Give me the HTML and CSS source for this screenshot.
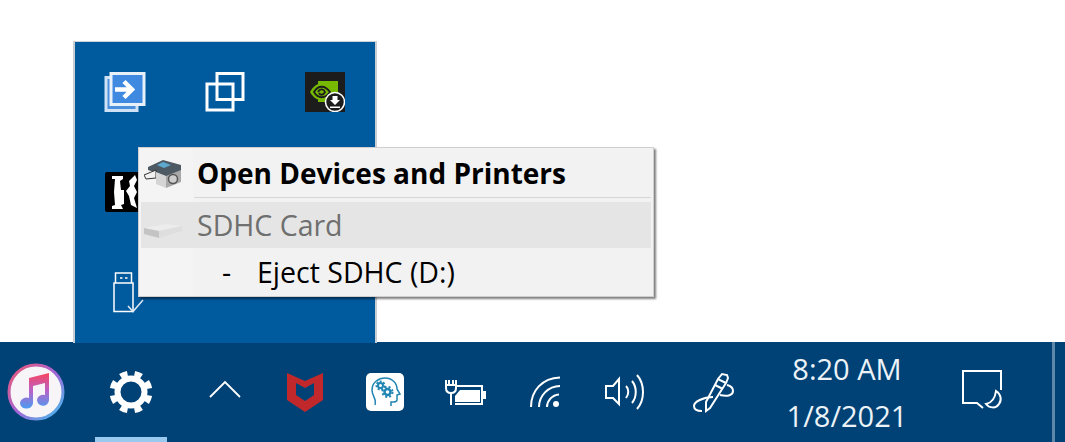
FILE: index.html
```html
<!DOCTYPE html>
<html lang="en">
<head>
    <meta charset="UTF-8" />
    <title>Tray</title>
    <link rel="stylesheet" href="styles.css">
</head>
<body>
    <div class="desktop">

        <!-- tray overflow window -->
        <div class="flyout">
            <div class="cell">
                <svg width="42" height="42" viewBox="0 0 42 42">
                    <rect x="2" y="6.500" width="31" height="33" fill="#4a90dc" stroke="#cfe2f5" stroke-width="3"/>
                    <rect x="7" y="2.500" width="33" height="31" fill="#3f8ae0" stroke="#e8f1fa" stroke-width="3"/>
                    <path d="M11 18.500H28M20 10.500L28 18.500L20 26.500" fill="none" stroke="#ffffff" stroke-width="4.500"/>
                </svg>
            </div>
            <div class="cell">
                <svg width="40" height="40" viewBox="0 0 40 40">
                    <rect x="12" y="1.500" width="26" height="26" fill="none" stroke="#ffffff" stroke-width="3"/>
                    <rect x="2" y="12" width="26" height="26" fill="none" stroke="#ffffff" stroke-width="3"/>
                </svg>
            </div>
            <div class="cell">
                <svg width="40" height="40" viewBox="0 0 40 40">
                    <rect width="40" height="40" fill="#1c1c1c"/>
                    <path d="M13 9H33V30H13Z" fill="#76b900"/>
                    <path d="M5 20C11 9 22 8 30 20C22 31 11 31 5 20Z" fill="#76b900"/>
                    <path d="M9 20C13 13 20 13 25 20C20 27 13 27 9 20Z" fill="none" stroke="#1c1c1c" stroke-width="1.800"/>
                    <path d="M13 20C15 16 19 17 20 20C18 24 15 23 14 21" fill="none" stroke="#1c1c1c" stroke-width="1.800"/>
                    <circle cx="30" cy="30" r="9.500" fill="#1c1c1c" stroke="#ffffff" stroke-width="1.500"/>
                    <path d="M27.500 24H32.500V28H35L30 33L25 28H27.500ZM25 34.500H35V36H25Z" fill="#ffffff"/>
                </svg>
            </div>
            <div class="cell">
                <svg width="40" height="40" viewBox="0 0 40 40">
                    <rect width="40" height="40" rx="2" fill="#000000"/>
                    <path d="M7 4H18V7L15 9L16 18L19 18V32L16 33L18 37H7V34L10 33L9 20L10 7L7 7Z" fill="#ffffff"/>
                    <path d="M21 19L25 14L24 9L30 3L32 8L29 14L32 20L29 26L32 36L26 33L24 24Z" fill="#ffffff"/>
                </svg>
            </div>
            <div class="cell"></div>
            <div class="cell"></div>
            <div class="cell usb">
                <svg width="31" height="41" viewBox="0 0 31 41">
                    <path d="M2.500 11V1H18.500V11M1 11H20V39.500H1Z" fill="none" stroke="#ffffff" stroke-width="1.500"/>
                    <path d="M7 6H9.500M12 6H14.500" stroke="#ffffff" stroke-width="1.500"/>
                    <path d="M15 34L20 39.500L30 28" fill="none" stroke="#dfeaf3" stroke-width="1.500"/>
                </svg>
            </div>
        </div>

        <!-- eject menu -->
        <div class="menu">
            <div class="menu-row top">
                <span class="menu-icon">
                    <svg width="38" height="28" viewBox="0 0 38 28">
                        <path d="M4 7L19 0L37 5V13L27 18L4 10Z" fill="#4d5a63"/>
                        <path d="M13 5L19 2L27 5L20 8Z" fill="#5ea9cf"/>
                        <path d="M0 15L12 10V18L2 19Z" fill="#f1f1f1" stroke="#333333"/>
                        <path d="M12 12L22 16V28L12 24Z" fill="#d5d5d5"/>
                        <path d="M22 16L37 10V22L22 28Z" fill="#a8a8a8"/>
                        <circle cx="29" cy="19" r="4.500" fill="#cccccc" stroke="#555555" stroke-width="1.500"/>
                    </svg>
                </span>
                <span class="menu-title">Open Devices and Printers</span>
            </div>
            <div class="menu-row device">
                <span class="menu-icon">
                    <svg width="38" height="15" viewBox="0 0 38 15">
                        <path d="M0 4L22 0L38 2L15 7Z" fill="#ececec"/>
                        <path d="M0 4L15 7V14L0 10Z" fill="#c4c4c4"/>
                        <path d="M15 7L38 2V7L15 14Z" fill="#dedede"/>
                    </svg>
                </span>
                <span>SDHC Card</span>
            </div>
            <div class="menu-row eject">
                <span class="eject-dash">-</span>
                <span>Eject SDHC (D:)</span>
            </div>
        </div>
    </div>

    <!-- taskbar -->
    <div class="taskbar">
        <div class="app">
            <svg width="58" height="58" viewBox="0 0 58 58">
                <defs>
                    <linearGradient id="ring" x1="0" y1="0" x2="1" y2="1">
                        <stop offset="0" stop-color="#f0566d"/>
                        <stop offset="0.5" stop-color="#a565d8"/>
                        <stop offset="1" stop-color="#3fc3ee"/>
                    </linearGradient>
                    <linearGradient id="note" x1="0" y1="0" x2="0" y2="1">
                        <stop offset="0" stop-color="#f8465f"/>
                        <stop offset="0.5" stop-color="#b862c8"/>
                        <stop offset="1" stop-color="#4a9cf2"/>
                    </linearGradient>
                </defs>
                <circle cx="29" cy="29" r="27" fill="#f7f5f7" stroke="url(#ring)" stroke-width="3"/>
                <path d="M22 15L42 10V37A6 5.500 0 1 1 38 32V20L26 23V40A6.500 5.500 0 1 1 22 35Z" fill="url(#note)"/>
            </svg>
        </div>
        <div class="app active">
            <svg width="48" height="48" viewBox="0 0 48 48">
                <circle cx="24" cy="24" r="13.500" fill="none" stroke="#ffffff" stroke-width="6"/>
                <circle cx="24" cy="24" r="18" fill="none" stroke="#ffffff" stroke-width="7" pathLength="80" stroke-dasharray="5 5" stroke-dashoffset="-2.500"/>
            </svg>
        </div>

        <div class="tray-icons">
            <div class="tray-icon chevron">
                <svg width="36" height="20" viewBox="0 0 36 20">
                    <path d="M3 17L18 2L33 17" fill="none" stroke="#ffffff" stroke-width="1.800"/>
                </svg>
            </div>
            <div class="tray-icon">
                <svg width="36" height="40" viewBox="0 0 36 40" fill-rule="evenodd">
                    <path d="M0 1L18 9L36 1V28L18 40L0 28ZM9 11V23L18 29L27 23V11L18 16Z" fill="#c0282c"/>
                </svg>
            </div>
            <div class="tray-icon">
                <svg width="38" height="38" viewBox="0 0 38 38">
                    <rect width="38" height="38" rx="5" fill="#ffffff"/>
                    <path d="M9 32C11 26 6 23 6 17C6 9 13 5 19 5C26 5 31 10 31 16L34 21L31 22V27C31 29 29 29 25 29V33" fill="none" stroke="#2085b3" stroke-width="1.500"/>
                    <circle cx="14.500" cy="12.500" r="2.500" fill="none" stroke="#2085b3" stroke-width="2"/>
                    <circle cx="14.500" cy="12.500" r="4" fill="none" stroke="#2085b3" stroke-width="2" stroke-dasharray="2 1.500"/>
                    <circle cx="21.500" cy="19" r="3" fill="none" stroke="#2085b3" stroke-width="2.500"/>
                    <circle cx="21.500" cy="19" r="5" fill="none" stroke="#2085b3" stroke-width="2" stroke-dasharray="2 2"/>
                </svg>
            </div>
            <div class="tray-icon">
                <svg width="42" height="28" viewBox="0 0 42 28">
                    <path d="M2 2V10C2 13 4 15 7 15C10 15 12 13 12 10V2M2 7H12M5 2V6M9 2V6M7 15V27" fill="none" stroke="#ffffff" stroke-width="2"/>
                    <path d="M12 8H38V26H11" fill="none" stroke="#ffffff" stroke-width="2"/>
                    <path d="M16 12H36V24H11V18Z" fill="#ffffff"/>
                    <rect x="39" y="13" width="3" height="8" fill="#ffffff"/>
                </svg>
            </div>
            <div class="tray-icon">
                <svg width="32" height="32" viewBox="0 0 32 32">
                    <path d="M2 31C2 15 13 2 31 1.500M10 31C10 20 19 10 31 10M18 31C18 25 23 19 30 18.500" fill="none" stroke="#ffffff" stroke-width="2"/>
                    <circle cx="27" cy="28" r="3" fill="#ffffff"/>
                </svg>
            </div>
            <div class="tray-icon">
                <svg width="42" height="38" viewBox="0 0 42 38">
                    <path d="M2 13H9L15 6V31L9 25H2Z" fill="none" stroke="#ffffff" stroke-width="2"/>
                    <path d="M22 13C25 16 25 21 22 25M28 8C33 14 33 24 28 30M33 2C41 11 41 27 33 36" fill="none" stroke="#ffffff" stroke-width="2"/>
                </svg>
            </div>
            <div class="tray-icon pen">
                <svg width="42" height="41" viewBox="0 0 42 41">
                    <path d="M13 39V30L25 7L33 11L17 36ZM25 7L29 2L34 3L35 6L33 11M22 13L30 17" fill="none" stroke="#ffffff" stroke-width="2"/>
                    <path d="M20 25C10 25 1 30 1 34C1 38 5 39 9 39M34 13C38 14 40 16 40 19C40 23 35 25 27 23" fill="none" stroke="#ffffff" stroke-width="2"/>
                </svg>
            </div>
        </div>

        <div class="clock">
            <div>8:20 AM</div>
            <div>1/8/2021</div>
        </div>

        <div class="notify">
            <svg width="41" height="41" viewBox="0 0 41 41">
                <path d="M39 20V1H1V33H15L21 38" fill="none" stroke="#ffffff" stroke-width="2"/>
                <path d="M34 21C39 24 40 30 37 34C34 39 27 38 24 34C29 33 33 29 34 21Z" fill="none" stroke="#ffffff" stroke-width="2"/>
            </svg>
        </div>

        <div class="show-desktop"></div>
    </div>
</body>
</html>
```

FILE: styles.css
```css
/* --- Page --- */
body {
    margin: 0;
    height: 442px;
    display: flex;
    flex-direction: column;
    overflow: hidden;
    background: white;
    font-family: "Open Sans", "Noto Sans", sans-serif;
}

.desktop {
    position: relative;
    height: 342px;
}

/* --- Tray overflow window --- */
.flyout {
    position: absolute;
    top: 41px;
    left: 73px;
    width: 300px;
    height: 300px;
    display: grid;
    grid-template-columns: repeat(3, 100px);
    grid-template-rows: repeat(3, 100px);
    background: #005a9e;
    border-top: 1px solid #ccd3d9;
    border-left: 2px solid #c9ced3;
    border-right: 2px solid #c9ced3;
    padding-bottom: 1px;
}

.cell {
    display: flex;
    align-items: center;
    justify-content: center;
}

.usb {
    padding-left: 7px;
    padding-top: 1px;
}

/* --- Eject menu --- */
.menu {
    position: absolute;
    top: 147px;
    left: 138px;
    width: 514px;
    height: 148px;
    background: linear-gradient(to right, #f4f4f4 54px, #f2f2f2 54px);
    border: 1px solid #cfcfcf;
    box-shadow: 2px 2px 2px rgba(0, 0, 0, 0.5);
    color: #000000;
    font-size: 28.500px;
}

.menu-row {
    display: flex;
    align-items: center;
    margin: 0 2px;
}

.menu-icon {
    width: 56px;
    flex-shrink: 0;
    display: flex;
    padding-left: 3px;
    box-sizing: border-box;
}

.top {
    height: 50px;
    margin-bottom: 4px;
    position: relative;
}

.top .menu-icon {
    padding-top: 2px;
}

.top::after {
    content: "";
    position: absolute;
    left: 53px;
    right: 0;
    bottom: 0;
    border-bottom: 1px solid #d6d6d6;
}

.menu-title {
    font-weight: 700;
    font-size: 28px;
    white-space: nowrap;
}

.device {
    height: 46px;
    background: #e5e5e5;
    color: #6f6f6f;
}

.device .menu-icon {
    padding-top: 12px;
}

.eject {
    height: 47px;
    padding-left: 81px;
}

.eject-dash {
    width: 35px;
}

/* --- Taskbar --- */
.taskbar {
    height: 100px;
    display: flex;
    align-items: center;
    background: #004275;
    color: #ecf2f7;
}

.app {
    width: 72px;
    height: 100px;
    display: flex;
    align-items: center;
    justify-content: center;
    box-sizing: border-box;
}

.app.active {
    margin-left: 23px;
    border-bottom: 5px solid #99c9ef;
    padding-top: 5px;
}

.tray-icons {
    display: flex;
    margin-left: 18px;
}

.tray-icon {
    width: 80px;
    height: 100px;
    display: flex;
    align-items: center;
    justify-content: center;
    box-sizing: border-box;
}

.chevron {
    padding-bottom: 4px;
}

.pen {
    padding-left: 18px;
}

.clock {
    width: 204px;
    text-align: center;
    font-size: 29px;
    line-height: 47px;
}

.notify {
    width: 66px;
    display: flex;
    justify-content: center;
    padding-bottom: 4px;
}

.show-desktop {
    width: 3px;
    height: 100px;
    margin-left: 37px;
    background: #5e87aa;
}
```
